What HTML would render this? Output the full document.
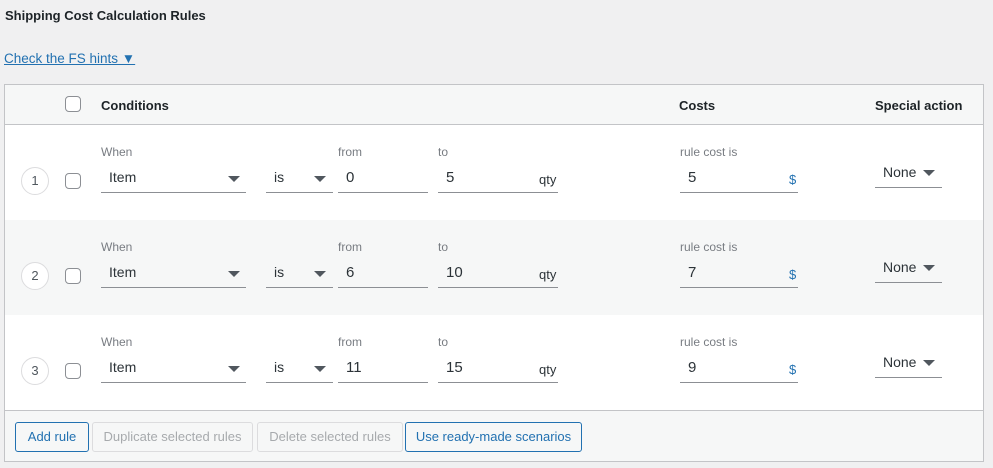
<!DOCTYPE html>
<html><head><style>
*{box-sizing:border-box;margin:0;padding:0}
body{width:993px;height:468px;background:#f0f0f1;font-family:"Liberation Sans",sans-serif;position:relative;overflow:hidden;color:#1d2327}
.a{position:absolute;white-space:nowrap}
.h{font-weight:bold;font-size:13px;color:#1d2327}
.tbl{position:absolute;left:4px;top:84px;width:980px;height:378px;border:1px solid #c3c4c7;background:#fff}
.row{position:absolute;left:0;width:978px;height:95px}
.lbl{font-size:12px;color:#787c82}
.val{font-size:15px;color:#2c3338}
.ul{position:absolute;height:1px;background:#8c8f94}
.tri{position:absolute;width:0;height:0;border-left:6px solid transparent;border-right:6px solid transparent;border-top:6px solid #50575e}
.cb{position:absolute;width:16px;height:16px;border:1px solid #8c8f94;border-radius:4px;background:#fff}
.circ{position:absolute;width:28px;height:28px;border:1px solid #dcdcde;border-radius:50%;font-size:13px;color:#50575e;text-align:center;line-height:26px;background:#fff}
.btn{position:absolute;top:337px;height:30px;border:1px solid #2271b1;border-radius:3px;font-size:13px;color:#2271b1;background:#f6f7f7;text-align:center;line-height:28px}
.dis{border-color:#dcdcde;color:#a7aaad}
</style></head><body>
<div class="a h" style="left:5px;top:8px">Shipping Cost Calculation Rules</div>
<div class="a" style="left:4px;top:51px;font-size:13.5px;color:#2271b1;text-decoration:underline">Check the FS hints ▼</div>
<div class="tbl">
 <div style="position:absolute;left:0;top:0;width:978px;height:40px;background:#f6f7f7;border-bottom:1px solid #c3c4c7"></div>
 <div class="cb" style="left:60px;top:11px"></div>
 <div class="a h" style="left:96px;top:13px">Conditions</div>
 <div class="a h" style="left:674px;top:13px">Costs</div>
 <div class="a h" style="left:870px;top:13px">Special action</div>

 <div class="row" style="top:40px;background:#fff"></div>
 <div class="row" style="top:135px;background:#f6f7f7"></div>
 <div class="row" style="top:230px;background:#fff"></div>
 <div style="position:absolute;left:0;top:325px;width:978px;height:51px;background:#f6f7f7;border-top:1px solid #c3c4c7"></div>

 <div class="btn" style="left:10px;width:74px">Add rule</div>
 <div class="btn dis" style="left:87px;width:161px">Duplicate selected rules</div>
 <div class="btn dis" style="left:252px;width:146px">Delete selected rules</div>
 <div class="btn" style="left:400px;width:177px">Use ready-made scenarios</div>
</div>
<div id="rows"></div>
<script>
var d=[["1","0","5","5"],["2","6","10","7"],["3","11","15","9"]],h="";
d.forEach(function(r,i){var t=125+i*95;
h+='<div class="circ" style="left:21px;top:'+(t+42)+'px">'+r[0]+'</div>'+
'<div class="cb" style="left:65px;top:'+(t+48)+'px"></div>'+
'<div class="a lbl" style="left:101px;top:'+(t+20)+'px">When</div>'+
'<div class="a lbl" style="left:338px;top:'+(t+20)+'px">from</div>'+
'<div class="a lbl" style="left:438px;top:'+(t+20)+'px">to</div>'+
'<div class="a lbl" style="left:680px;top:'+(t+20)+'px">rule cost is</div>'+
'<div class="a val" style="left:109px;top:'+(t+44)+'px;font-size:14px">Item</div><div class="tri" style="left:228px;top:'+(t+51)+'px"></div><div class="ul" style="left:101px;width:145px;top:'+(t+67)+'px"></div>'+
'<div class="a val" style="left:274px;top:'+(t+44)+'px;font-size:14px">is</div><div class="tri" style="left:314px;top:'+(t+51)+'px"></div><div class="ul" style="left:266px;width:67px;top:'+(t+67)+'px"></div>'+
'<div class="a val" style="left:346px;top:'+(t+44)+'px">'+r[1]+'</div><div class="ul" style="left:338px;width:90px;top:'+(t+67)+'px"></div>'+
'<div class="a val" style="left:446px;top:'+(t+44)+'px">'+r[2]+'</div><div class="a" style="left:539px;top:'+(t+47)+'px;font-size:13px;color:#2c3338">qty</div><div class="ul" style="left:438px;width:120px;top:'+(t+67)+'px"></div>'+
'<div class="a val" style="left:688px;top:'+(t+44)+'px">'+r[3]+'</div><div class="a" style="left:789px;top:'+(t+47)+'px;font-size:13px;color:#2271b1">$</div><div class="ul" style="left:680px;width:118px;top:'+(t+67)+'px"></div>'+
'<div class="a val" style="left:883px;top:'+(t+39)+'px;font-size:14px">None</div><div class="tri" style="left:923px;top:'+(t+45)+'px"></div><div class="ul" style="left:875px;width:67px;top:'+(t+62)+'px"></div>';});
document.getElementById("rows").innerHTML=h;
</script>
</body></html>
